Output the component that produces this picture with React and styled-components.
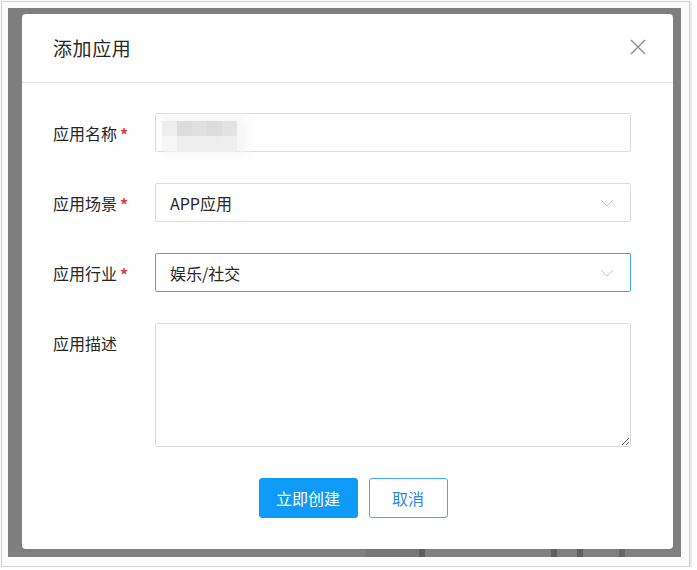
import React from "react";
import styled, { createGlobalStyle } from "styled-components";

const GlobalStyle = createGlobalStyle`
  html, body {
    margin: 0;
    padding: 0;
    background: #ffffff;
    font-family: "Noto Sans CJK SC", "Noto Sans", "Liberation Sans", sans-serif;
  }
`;

const Frame = styled.div`
  box-sizing: border-box;
  width: 689px;
  height: 566px;
  margin: 1px 0 0 1px;
  border: 1px solid #d0d0d0;
  box-shadow: 1px 1px 3px rgba(0, 0, 0, 0.15);
  padding: 6px 8px 9px 6px;
  background: #fbfbfb;
`;

const Overlay = styled.div`
  position: relative;
  box-sizing: border-box;
  height: 100%;
  background: #7f7f7f;
  padding: 6px 8px 8px 14px;
`;

const Mark = styled.div`
  position: absolute;
  bottom: 0;
  height: 8px;
  background: ${(p) => p.color || "#5f5f5f"};
`;

const Modal = styled.div`
  position: relative;
  box-sizing: border-box;
  height: 100%;
  background: #ffffff;
  border-radius: 4px;
  display: flex;
  flex-direction: column;
  z-index: 1;
`;

const Header = styled.div`
  height: 69px;
  box-sizing: border-box;
  border-bottom: 1px solid #e9e9e9;
  display: flex;
  align-items: center;
  justify-content: space-between;
  padding: 0 26px 0 31px;
`;

const Title = styled.div`
  font-size: 19px;
  letter-spacing: 0.6px;
  color: #262626;
  margin-top: -2px;
`;

const Close = styled.div`
  width: 18px;
  height: 18px;
  display: flex;
  align-items: center;
  justify-content: center;
  margin-top: -2px;
`;

const Body = styled.div`
  padding: 30px 42px 0 31px;
  display: flex;
  flex-direction: column;
  gap: 31px;
`;

const Row = styled.div`
  display: flex;
  align-items: ${(p) => (p.top ? "flex-start" : "center")};
`;

const Label = styled.div`
  width: 102px;
  flex-shrink: 0;
  font-size: 16px;
  color: #262626;
  padding-top: ${(p) => (p.top ? "8px" : "0")};
  display: flex;
  align-items: center;
`;

const Star = styled.span`
  color: #e4393c;
  margin: 3px 0 0 3px;
  font-size: 16px;
  font-weight: bold;
`;

const Field = styled.div`
  position: relative;
  flex: 1;
  height: 39px;
  box-sizing: border-box;
  border: 1px solid ${(p) => (p.focus ? "#3aa7f7" : "#dcdcdc")};
  border-radius: 2px;
  background: #ffffff;
  display: flex;
  align-items: center;
  justify-content: space-between;
  padding: 0 16px 0 14px;
  font-size: 16px;
  color: #262626;
`;

const Mosaic = styled.div`
  display: grid;
  grid-template-columns: repeat(5, 15px);
  grid-template-rows: repeat(2, 15px);
  align-self: flex-end;
  margin: 0 0 0 -8px;
  filter: blur(0.6px);
  box-shadow: 6px 0 8px 4px rgba(245, 245, 245, 0.9);
`;

const Tile = styled.div`
  background: ${(p) => p.shade};
`;

const TextArea = styled.textarea`
  flex: 1;
  height: 124px;
  box-sizing: border-box;
  border: 1px solid #dcdcdc;
  border-radius: 2px;
  resize: vertical;
  outline: none;
  font-family: inherit;
  font-size: 16px;
  padding: 8px 14px;
`;

const Footer = styled.div`
  display: flex;
  justify-content: center;
  gap: 11px;
  padding: 31px 0 0 11px;
`;

const Button = styled.button`
  height: 40px;
  box-sizing: border-box;
  padding: 0;
  width: ${(p) => (p.primary ? "99px" : "79px")};
  border-radius: 3px;
  font-family: inherit;
  font-size: 16px;
  border: 1px solid ${(p) => (p.primary ? "#0d9bf7" : "#45a7f5")};
  background: ${(p) => (p.primary ? "#0d9bf7" : "#ffffff")};
  color: ${(p) => (p.primary ? "#ffffff" : "#2f86e8")};
  cursor: pointer;
`;

const shades = [
  "#eeeeee", "#dcdcdc", "#e0e0e0", "#dcdcdc", "#e2e2e2",
  "#f6f6f6", "#eeeeee", "#ededed", "#eeeeee", "#efefef",
];

function Chevron() {
  return (
    <svg width="14" height="8" viewBox="0 0 14 8">
      <path d="M1 1 L7 7 L13 1" fill="none" stroke="#c4c4c4" strokeWidth="1" />
    </svg>
  );
}

export default function App() {
  return (
    <>
      <GlobalStyle />
      <Frame>
        <Overlay>
          <Mark style={{ left: 357, width: 55 }} color="#777777" />
          <Mark style={{ left: 411, width: 6 }} />
          <Mark style={{ left: 543, width: 6 }} />
          <Mark style={{ left: 569, width: 6 }} />
          <Mark style={{ left: 611, width: 6 }} color="#666666" />
          <Modal>
            <Header>
              <Title>添加应用</Title>
              <Close>
                <svg width="16" height="16" viewBox="0 0 16 16">
                  <path d="M1 1 L15 15 M15 1 L1 15" stroke="#8c8c8c" strokeWidth="1.4" />
                </svg>
              </Close>
            </Header>
            <Body>
              <Row>
                <Label>
                  应用名称<Star>*</Star>
                </Label>
                <Field>
                  <Mosaic>
                    {shades.map((s, i) => (
                      <Tile key={i} shade={s} />
                    ))}
                  </Mosaic>
                </Field>
              </Row>
              <Row>
                <Label>
                  应用场景<Star>*</Star>
                </Label>
                <Field>
                  <span>APP应用</span>
                  <Chevron />
                </Field>
              </Row>
              <Row>
                <Label>
                  应用行业<Star>*</Star>
                </Label>
                <Field focus>
                  <span>娱乐/社交</span>
                  <Chevron />
                </Field>
              </Row>
              <Row top>
                <Label top>应用描述</Label>
                <TextArea />
              </Row>
            </Body>
            <Footer>
              <Button primary>立即创建</Button>
              <Button>取消</Button>
            </Footer>
          </Modal>
        </Overlay>
      </Frame>
    </>
  );
}
